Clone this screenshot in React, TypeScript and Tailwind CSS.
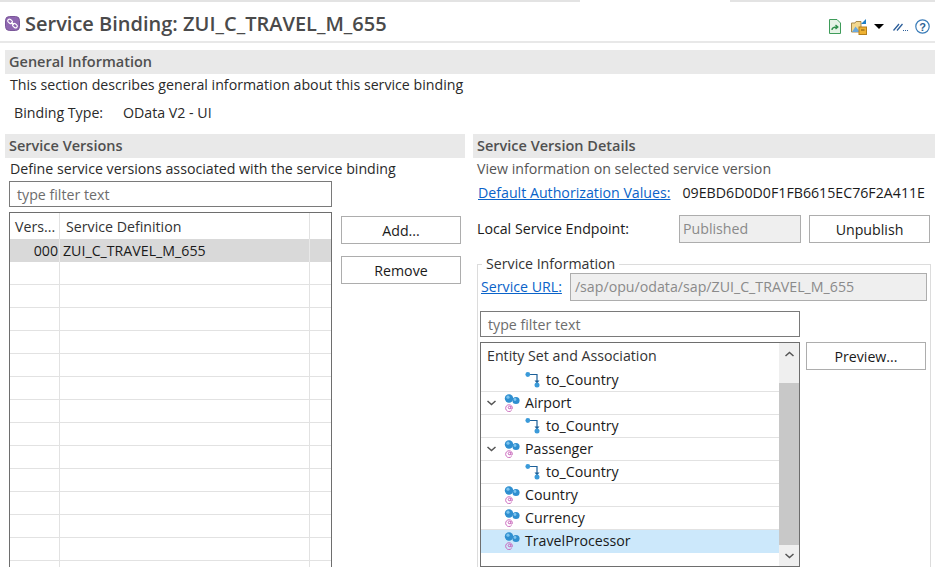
const font = "[font-family:'Open_Sans','Noto_Sans',sans-serif]";

function SectionHeader({ children }: { children: string }) {
  return (
    <div className="flex h-6 items-center bg-[#e9e9e9] px-1 pb-[1px] text-[14.5px] font-semibold text-[#505050]">{children}</div>
  );
}

function Button({ children, className = "" }: { children: string; className?: string }) {
  return (
    <button className={`flex h-7 w-[120px] shrink-0 items-center justify-center border border-[#adadad] bg-white pt-[1px] text-[14.2px] text-[#1a1a1a] ${className}`}>
      {children}
    </button>
  );
}

function FilterBox({ className = "" }: { className?: string }) {
  return (
    <div className={`flex h-[26px] items-center border border-[#7a7a7a] bg-white px-[7px] pt-[2px] text-[14.2px] text-[#6d6d6d] ${className}`}>
      type filter text
    </div>
  );
}

function BindingIcon() {
  return (
    <svg width="15" height="15" viewBox="0 0 15 15" className="shrink-0">
      <rect x="0.5" y="0.5" width="14" height="14" rx="4" fill="#8e66b0" stroke="#7a5699" />
      <rect x="2.6" y="3.6" width="5" height="3.4" rx="1.6" transform="rotate(40 5 5.3)" fill="none" stroke="#fff" strokeWidth="1.2" />
      <rect x="7.4" y="8" width="5" height="3.4" rx="1.6" transform="rotate(40 10 9.7)" fill="none" stroke="#fff" strokeWidth="1.2" />
      <path d="M6 6.4L9 8.6" stroke="#fff" strokeWidth="1.2" />
    </svg>
  );
}

function EntityIcon() {
  return (
    <svg width="16" height="18" viewBox="0 0 16 18" className="shrink-0">
      <circle cx="5" cy="4.5" r="4.2" fill="#2f8fd0" />
      <circle cx="4" cy="3.2" r="1.6" fill="#7cc4ef" />
      <circle cx="12" cy="6.5" r="3.6" fill="#2f8fd0" />
      <circle cx="11" cy="5.5" r="1.4" fill="#7cc4ef" />
      <path d="M7.5 16.5A3.4 3.4 0 1 1 8.4 13.5V14.3C8.4 15.3 6.8 15.3 6.8 14.3V12.2M6.8 13.5A1.3 1.3 0 1 1 6.7 13" fill="none" stroke="#c65fb8" strokeWidth="0.9" />
    </svg>
  );
}

function AssocIcon() {
  return (
    <svg width="16" height="16" viewBox="0 0 16 16" className="shrink-0">
      <path d="M3 2.5H12V10" fill="none" stroke="#1c5f98" strokeWidth="1.2" />
      <path d="M9.5 8.5H14.5L12 11.5Z" fill="#1c5f98" />
      <circle cx="2.8" cy="2.5" r="2.4" fill="#3a9ad9" />
      <circle cx="12" cy="13" r="2.5" fill="#3a9ad9" />
    </svg>
  );
}

function Chevron({ up = false, className = "" }: { up?: boolean; className?: string }) {
  return (
    <svg width="9" height="6" viewBox="0 0 9 6" className={className}>
      <path d={up ? "M0.5 5L4.5 1.5L8.5 5" : "M0.5 1L4.5 4.5L8.5 1"} fill="none" stroke="#555" strokeWidth="1.5" />
    </svg>
  );
}

function ToolbarIcons() {
  return (
    <div className="flex items-center">
      <svg width="12" height="15" viewBox="0 0 12 15" className="mr-[10px]">
        <path d="M0.5 0.5H8L11.5 4V14.5H0.5Z" fill="#e6f3e6" stroke="#3f9c5a" />
        <path d="M3 11C3 9 5 8 8 8M6.5 6L8.8 8L6.5 10" fill="none" stroke="#2f8f4b" strokeWidth="1.4" />
      </svg>
      <svg width="16" height="16" viewBox="0 0 16 16" className="mr-[7px]">
        <path d="M0.5 4H4L5 2.5H10V13H0.5Z" fill="#f3d88f" stroke="#a98a4a" />
        <path d="M1 13L4.5 7.5L9 13Z" fill="#6aa9dd" />
        <path d="M15 0V5H10Z" fill="#1f7fc6" />
        <rect x="8" y="8" width="7.5" height="7.5" fill="#eeb233" stroke="#b57f1a" />
        <path d="M10 11H13.5" stroke="#7a5510" />
      </svg>
      <svg width="10" height="5" viewBox="0 0 10 5" className="mr-[9px]">
        <path d="M0 0H10L5 5Z" fill="#000" />
      </svg>
      <svg width="15" height="8" viewBox="0 0 15 8" className="mr-[7px]">
        <path d="M0.5 7.5L6 1M4 7.5L9.5 1" fill="none" stroke="#2d5f9a" strokeWidth="1.3" />
        <path d="M10 7.5H11M12 7.5H13M14 7.5H15" stroke="#2d5f9a" />
      </svg>
      <svg width="15" height="15" viewBox="0 0 15 15">
        <circle cx="7.5" cy="7.5" r="6.7" fill="#fff" stroke="#3a7cb8" strokeWidth="1.2" />
        <text x="7.5" y="11.5" textAnchor="middle" fontSize="11" fontWeight="700" fill="#2b5f93" fontFamily="Liberation Sans, sans-serif">?</text>
      </svg>
    </div>
  );
}

function VersionsTable() {
  const rows = Array.from({ length: 14 });
  return (
    <div className="h-[400px] w-[323px] overflow-hidden border border-[#6e6e6e] text-[14.2px] text-[#1a1a1a]">
      <div className="grid h-[26px] grid-cols-[50px_250px_21px] items-center">
        <div className="h-full border-r border-[#e2e2e2] pl-[5px] leading-[27px] text-[#333]">Vers...</div>
        <div className="h-full border-r border-[#e2e2e2] pl-[6px] leading-[27px] text-[#333]">Service Definition</div>
        <div />
      </div>
      <div className="grid h-[23px] grid-cols-[50px_250px_21px] bg-[#d9d9d9] leading-[24px]">
        <div className="border-r border-[#e8e8e8] pr-[1px] text-right">000</div>
        <div className="border-r border-[#e8e8e8] pl-[3px]">ZUI_C_TRAVEL_M_655</div>
        <div />
      </div>
      {rows.map((_, i) => (
        <div key={i} className="grid h-[23px] grid-cols-[50px_250px_21px] border-b border-[#e2e2e2]">
          <div className="border-r border-[#e2e2e2]" />
          <div className="border-r border-[#e2e2e2]" />
          <div />
        </div>
      ))}
    </div>
  );
}

type TreeRow = { label: string; kind: "assoc" | "entity"; open?: boolean; selected?: boolean };

const treeRows: TreeRow[] = [
  { label: "to_Country", kind: "assoc" },
  { label: "Airport", kind: "entity", open: true },
  { label: "to_Country", kind: "assoc" },
  { label: "Passenger", kind: "entity", open: true },
  { label: "to_Country", kind: "assoc" },
  { label: "Country", kind: "entity" },
  { label: "Currency", kind: "entity" },
  { label: "TravelProcessor", kind: "entity", selected: true },
];

function EntityTree() {
  return (
    <div className="flex h-[225px] w-[320px] shrink-0 border border-[#6e6e6e] text-[14.2px] text-[#1a1a1a]">
      <div className="min-w-0 flex-1">
        <div className="flex h-[26px] items-center pl-[6px] text-[#333]">Entity Set and Association</div>
        {treeRows.map((row, i) => (
          <div
            key={i}
            className={`flex h-[23px] items-center border-b ${row.selected ? "border-transparent bg-[#cce8fb]" : "border-[#e2e2e2]"}`}
          >
            {row.kind === "assoc" ? (
              <div className="flex items-center pl-[44px]">
                <AssocIcon />
                <span className="ml-[5px]">{row.label}</span>
              </div>
            ) : (
              <div className="flex items-center pl-[6px]">
                <div className="flex w-[17px] justify-start">{row.open && <Chevron />}</div>
                <EntityIcon />
                <span className="ml-[5px]">{row.label}</span>
              </div>
            )}
          </div>
        ))}
      </div>
      <div className="flex w-[20px] shrink-0 flex-col bg-[#efefef]">
        <div className="flex h-[40px] items-start justify-center pt-[8px]">
          <Chevron up />
        </div>
        <div className="flex-1 bg-[#c8c8c8]" />
        <div className="flex h-[21px] items-center justify-center">
          <Chevron />
        </div>
      </div>
    </div>
  );
}

export default function App() {
  return (
    <div className={`h-[567px] w-[935px] overflow-hidden bg-white ${font}`}>
      <div className="flex h-[2px]">
        <div className="w-[580px] bg-[#e3e3e3]" />
        <div className="w-[150px]" />
        <div className="flex-1 bg-[#e3e3e3]" />
      </div>

      <div className="flex h-[41px] items-center justify-between border-b-2 border-[#e8e8e8] pt-[4px] pr-[5px] pl-[5px]">
        <div className="flex items-center gap-[5px]">
          <BindingIcon />
          <h1 className="text-[20px] font-semibold text-[#4a4a4a]">Service Binding: ZUI_C_TRAVEL_M_655</h1>
        </div>
        <div className="pt-[6px]">
          <ToolbarIcons />
        </div>
      </div>

      <div className="pt-[7px] pl-[5px] text-[14.2px] text-[#1a1a1a]">
        <SectionHeader>General Information</SectionHeader>
        <p className="mt-[1px] pl-[5px] leading-[20px] text-[#2a2a2a]">This section describes general information about this service binding</p>
        <div className="mt-[8px] flex pl-[9px] leading-[20px] text-[#2a2a2a]">
          <span className="w-[109px]">Binding Type:</span>
          <span>OData V2 - UI</span>
        </div>
      </div>

      <div className="mt-[11px] grid grid-cols-[460px_462px] gap-x-[8px] pl-[5px] text-[14.2px]">
        <section>
          <SectionHeader>Service Versions</SectionHeader>
          <p className="mt-px pl-[5px] leading-[20px] text-[#2a2a2a]">Define service versions associated with the service binding</p>
          <FilterBox className="mt-[2px] ml-[4px] w-[323px]" />
          <div className="mt-[5px] ml-[4px] flex gap-[9px]">
            <VersionsTable />
            <div className="flex flex-col gap-3 pt-1">
              <Button>Add...</Button>
              <Button>Remove</Button>
            </div>
          </div>
        </section>

        <section>
          <SectionHeader>Service Version Details</SectionHeader>
          <p className="mt-px pl-[4px] leading-[20px] text-[#555]">View information on selected service version</p>
          <div className="mt-[4px] flex pl-[5px] leading-[20px]">
            <a className="text-[#0a63c9] underline">Default Authorization Values:</a>
            <span className="ml-[12px] text-[#1a1a1a]">09EBD6D0D0F1FB6615EC76F2A411E</span>
          </div>
          <div className="mt-[11px] flex items-center pt-px pl-[4px]">
            <span className="w-[202px] text-[#1a1a1a]">Local Service Endpoint:</span>
            <div className="flex h-7 w-[122px] items-center border border-[#adadad] bg-[#efefef] px-[3px] text-[#8a8a8a]">Published</div>
            <Button className="ml-[8px] w-[121px]">Unpublish</Button>
          </div>
          <fieldset className="mt-[12px] ml-[4px] h-[320px] w-[454px] border border-[#dcdcdc] px-[2px]">
            <legend className="ml-[2px] px-[4px] leading-[18px] text-[#333]">Service Information</legend>
            <div className="flex items-center">
              <a className="ml-px text-[#0a63c9] underline">Service URL:</a>
              <div className="ml-[8px] flex h-7 w-[357px] items-center border border-[#adadad] bg-[#efefef] px-[4px] text-[#8a8a8a]">/sap/opu/odata/sap/ZUI_C_TRAVEL_M_655</div>
            </div>
            <FilterBox className="mt-[10px] w-[320px]" />
            <div className="mt-[5px] flex gap-[6px]">
              <EntityTree />
              <Button>Preview...</Button>
            </div>
          </fieldset>
        </section>
      </div>
    </div>
  );
}
